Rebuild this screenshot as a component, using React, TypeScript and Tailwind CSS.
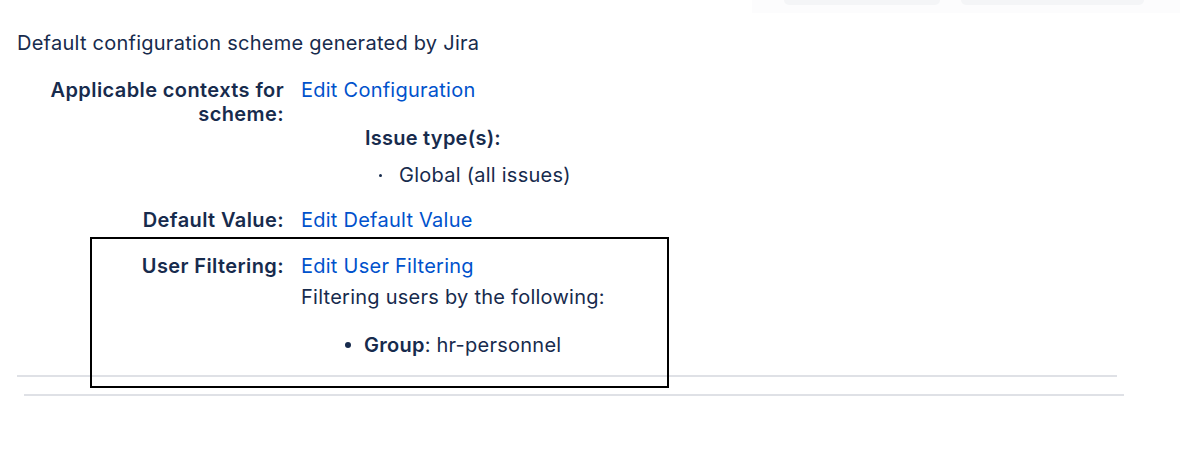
export default function App() {
  return (
    <div className="relative h-[462px] w-[1180px] overflow-hidden bg-white text-[20px] leading-6 tracking-[0.25px] text-[#172b4d]" style={{ fontFamily: 'Inter, "Noto Sans", sans-serif' }}>
      <div className="ml-[752px] flex h-[13px] gap-[21px] bg-[#fcfcfd] pl-[32px]">
        <div className="h-[5px] w-[156px] rounded-b-md bg-[#f4f5f7]" />
        <div className="h-[5px] w-[183px] rounded-b-md bg-[#f4f5f7]" />
      </div>

      <p className="ml-[17px] mt-[18px]">Default configuration scheme generated by Jira</p>

      <div className="ml-[17px] mt-[23px] grid grid-cols-[267px_1fr] gap-x-[17px]">
        <div className="pl-[24px] text-right font-semibold tracking-[0.4px]">Applicable contexts for scheme:</div>
        <div>
          <a className="text-[#0052cc]">Edit Configuration</a>
          <div className="ml-[64px] mt-[24px] font-semibold">Issue type(s):</div>
          <div className="ml-[78px] mt-[13px] flex items-center gap-[17px]">
            <span className="h-[3px] w-[3px] rounded-full bg-[#172b4d]" />
            <span>Global (all issues)</span>
          </div>
        </div>

        <div className="mt-[21px] text-right font-semibold tracking-[0.4px]">Default Value:</div>
        <div className="mt-[21px]">
          <a className="text-[#0052cc]">Edit Default Value</a>
        </div>

        <div className="mt-[22px] text-right font-semibold tracking-[0.4px]">User Filtering:</div>
        <div className="mt-[22px]">
          <a className="text-[#0052cc]">Edit User Filtering</a>
          <div className="mt-[7px]">Filtering users by the following:</div>
          <div className="ml-[44px] mt-[24px] flex items-center gap-[13px]">
            <span className="h-[6px] w-[6px] rounded-full bg-[#172b4d]" />
            <span>
              <b className="font-semibold">Group</b>: hr-personnel
            </span>
          </div>
        </div>
      </div>

      <div className="ml-[17px] mt-[18px] h-[2px] w-[1100px] bg-[#dfe1e6]" />
      <div className="ml-[24px] mt-[17px] h-[2px] w-[1100px] bg-[#dfe1e6]" />

      <div className="absolute left-[90px] top-[237px] h-[151px] w-[579px] border-2 border-black" />
    </div>
  )
}
